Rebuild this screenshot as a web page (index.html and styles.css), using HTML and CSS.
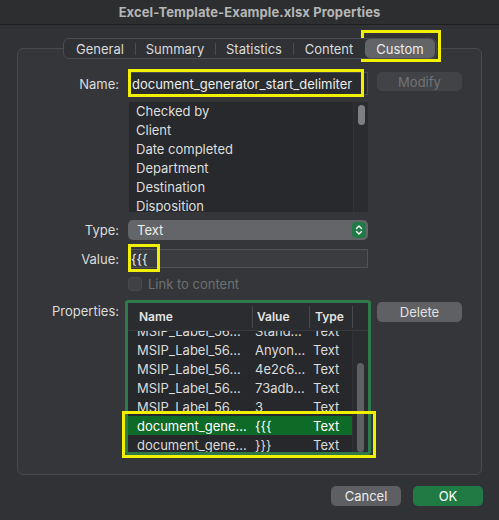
FILE: index.html
```html
<!DOCTYPE html>
<html>
<head>
<meta charset="utf-8">
<title>Excel-Template-Example.xlsx Properties</title>
<link rel="stylesheet" href="styles.css">
</head>
<body>
<div class="window">
  <div class="titlebar">Excel-Template-Example.xlsx Properties</div>
  <div class="tabs">
    <div class="tab w-general">General</div>
    <div class="tab w-summary sep">Summary</div>
    <div class="tab w-stats sep">Statistics</div>
    <div class="tab w-content sep">Content</div>
    <div class="tab w-custom selected">Custom</div>
  </div>
  <div class="panel">
    <div class="row row-name">
      <div class="lbl">Name:</div>
      <div class="field name-field">document_generator_start_delimiter</div>
      <div class="btn btn-disabled">Modify</div>
    </div>
    <div class="row row-list">
      <div class="lbl"></div>
      <div class="list">
        <div class="list-items">
          <div class="item">Checked by</div>
          <div class="item">Client</div>
          <div class="item">Date completed</div>
          <div class="item">Department</div>
          <div class="item">Destination</div>
          <div class="item">Disposition</div>
        </div>
        <div class="vscroll"><div class="thumb list-thumb"></div></div>
      </div>
    </div>
    <div class="row row-type">
      <div class="lbl">Type:</div>
      <div class="popup">
        <span class="popup-text">Text</span>
        <span class="stepper">
          <svg width="14" height="16" viewBox="0 0 14 16">
            <path d="M4.5 6.5 L7 4 L9.5 6.5" fill="none" stroke="#ffffff" stroke-width="1.4" stroke-linecap="round" stroke-linejoin="round"/>
            <path d="M4.5 9.5 L7 12 L9.5 9.5" fill="none" stroke="#ffffff" stroke-width="1.4" stroke-linecap="round" stroke-linejoin="round"/>
          </svg>
        </span>
      </div>
    </div>
    <div class="row row-value">
      <div class="lbl">Value:</div>
      <div class="field value-field">{{{</div>
    </div>
    <div class="row row-check">
      <div class="lbl"></div>
      <div class="check-wrap">
        <span class="checkbox"></span>
        <span class="check-label">Link to content</span>
      </div>
    </div>
    <div class="row row-props">
      <div class="lbl lbl-top">Properties:</div>
      <div class="table">
        <div class="thead">
          <div class="th c-name">Name</div>
          <div class="th c-value">Value</div>
          <div class="th c-type">Type</div>
          <div class="th c-scroll"></div>
        </div>
        <div class="tbody">
          <div class="rows">
            <div class="tr first"><span class="td c-name">MSIP_Label_56…</span><span class="td c-value">Stand…</span><span class="td c-type">Text</span></div>
            <div class="tr"><span class="td c-name">MSIP_Label_56…</span><span class="td c-value">Anyon…</span><span class="td c-type">Text</span></div>
            <div class="tr"><span class="td c-name">MSIP_Label_56…</span><span class="td c-value">4e2c6…</span><span class="td c-type">Text</span></div>
            <div class="tr"><span class="td c-name">MSIP_Label_56…</span><span class="td c-value">73adb…</span><span class="td c-type">Text</span></div>
            <div class="tr"><span class="td c-name">MSIP_Label_56…</span><span class="td c-value">3</span><span class="td c-type">Text</span></div>
            <div class="tr sel"><span class="td c-name">document_gene…</span><span class="td c-value">{{{</span><span class="td c-type">Text</span></div>
            <div class="tr"><span class="td c-name">document_gene…</span><span class="td c-value">}}}</span><span class="td c-type">Text</span></div>
          </div>
          <div class="tscroll"><div class="thumb table-thumb"></div></div>
        </div>
      </div>
      <div class="btn btn-delete">Delete</div>
    </div>
  </div>
  <div class="footer">
    <div class="btn btn-cancel">Cancel</div>
    <div class="btn btn-ok">OK</div>
  </div>

  <div class="hl hl-custom"></div>
  <div class="hl hl-name"></div>
  <div class="hl hl-value"></div>
  <div class="hl hl-table"></div>
</div>
</body>
</html>
```

FILE: styles.css
```css
html, body {
  margin: 0;
  padding: 0;
}
body {
  background: #303235;
  font-family: Inter, "Noto Sans", "Liberation Sans", sans-serif;
  font-size: 13px;
  color: #dedede;
}
.window {
  position: relative;
  width: 499px;
  height: 520px;
  overflow: hidden;
  background: #303235;
}
.titlebar {
  height: 24px;
  border-bottom: 1px solid #1d1e20;
  background: #2c2e30;
  display: flex;
  align-items: center;
  justify-content: center;
  font-weight: 700;
  color: #b6b6b6;
  letter-spacing: 0.1px;
}

/* tabs */
.tabs {
  position: relative;
  z-index: 1;
  margin: 13px 0 0 63px;
  width: 374px;
  height: 21px;
  box-sizing: border-box;
  border: 1px solid #4a4c4f;
  border-radius: 6px;
  background: #2f3134;
  display: flex;
  align-items: center;
  padding: 0 1px;
}
.tab {
  height: 19px;
  display: flex;
  align-items: center;
  justify-content: center;
  color: #dcdcdc;
  box-sizing: border-box;
}
.tab.sep {
  background: linear-gradient(#4b4d50, #4b4d50) left center / 1px 12px no-repeat;
}
.w-general { width: 70px; }
.w-summary { width: 80px; }
.w-stats { width: 78px; }
.w-content { width: 72px; }
.w-custom { width: 70px; }
.tab.selected {
  background: #626467;
  border-radius: 5px;
  color: #ececec;
}

/* panel */
.panel {
  margin: -11px 17px 0 17px;
  height: 427px;
  box-sizing: border-box;
  border: 1px solid #484a4d;
  border-radius: 6px;
  background: #343639;
  padding-top: 23px;
}
.row {
  display: grid;
  grid-template-columns: 101px 240px 85px;
  column-gap: 9px;
  align-items: center;
}
.lbl {
  text-align: right;
  color: #dcdcdc;
}
.lbl-top {
  align-self: start;
  margin-top: 3px;
}
.row-name { height: 23px; }
.row-list { height: 110px; margin-top: 7px; }
.row-type { height: 20px; margin-top: 8px; }
.row-value { height: 19px; margin-top: 9px; }
.row-check { height: 14px; margin-top: 9px; }
.row-props { height: 155px; margin-top: 9px; align-items: start; }

.field {
  box-sizing: border-box;
  height: 100%;
  display: flex;
  align-items: center;
  white-space: nowrap;
  overflow: hidden;
}
.name-field {
  margin-left: 1px;
  background: #2a2c2f;
  border: 1px solid #4a4c4f;
  padding-left: 2px;
  color: #ececec;
}
.value-field {
  background: #3a3c3f;
  border: 1px solid #505255;
  padding-left: 2px;
  color: #ececec;
}

.btn {
  box-sizing: border-box;
  height: 19px;
  border-radius: 5px;
  display: flex;
  align-items: center;
  justify-content: center;
  color: #e2e2e2;
  background: #5e6063;
}
.btn-disabled {
  align-self: start;
  background: #414346;
  color: #727477;
}
.btn-delete {
  margin-top: 2px;
  height: 20px;
}

/* list */
.list {
  height: 100%;
  margin-left: 1px;
  display: flex;
  background: #27292c;
  overflow: hidden;
}
.list-items {
  flex: 1;
  padding-top: 0;
}
.item {
  height: 19px;
  line-height: 19px;
  padding-left: 7px;
  color: #dedede;
  white-space: nowrap;
}
.vscroll {
  width: 15px;
  background: #2a2c2f;
  border-left: 1px solid #323437;
  display: flex;
  justify-content: center;
  padding-top: 3px;
  box-sizing: border-box;
}
.thumb {
  width: 7px;
  border-radius: 4px;
}
.list-thumb {
  height: 20px;
  background: #7d7f82;
}

/* popup */
.popup {
  height: 20px;
  box-sizing: border-box;
  background: #636568;
  border-radius: 5px;
  display: flex;
  align-items: center;
  justify-content: space-between;
  padding: 0 2px 0 9px;
  color: #ececec;
}
.stepper {
  width: 14px;
  height: 16px;
  background: #217a45;
  border-radius: 4px;
  display: flex;
}

/* checkbox */
.check-wrap {
  display: flex;
  align-items: center;
  gap: 6px;
  height: 14px;
}
.checkbox {
  width: 14px;
  height: 14px;
  box-sizing: border-box;
  border-radius: 4px;
  background: #3f4144;
  border: 1px solid #47494c;
}
.check-label {
  color: #6e7073;
}

/* table */
.table {
  margin: 0 -3px;
  height: 155px;
  box-sizing: border-box;
  border: 3px solid #2e7a4b;
  border-radius: 3px;
  background: #26282b;
  display: flex;
  flex-direction: column;
  overflow: hidden;
}
.thead {
  height: 28px;
  flex: none;
  display: flex;
  align-items: center;
  background: #2a2c2f;
  border-bottom: 1px solid #38393c;
  box-sizing: border-box;
}
.th {
  font-size: 12px;
  font-weight: 600;
  color: #e4e4e4;
  height: 28px;
  line-height: 28px;
  box-sizing: border-box;
}
.th.c-value, .th.c-type, .th.c-scroll {
  background: linear-gradient(#48494c, #48494c) left center / 1px 22px no-repeat;
}
.c-name { width: 124px; }
.c-value { width: 57px; }
.c-type { width: 43px; }
.c-scroll { width: 16px; }
.th.c-name { padding-left: 11px; }
.th.c-value { padding-left: 5px; }
.th.c-type { padding-left: 6px; }

.tbody {
  flex: 1;
  display: flex;
  overflow: hidden;
}
.rows {
  width: 224px;
  overflow: hidden;
}
.tr {
  height: 19px;
  display: flex;
  align-items: center;
  white-space: nowrap;
}
.tr.first {
  margin-top: -10px;
}
.td {
  overflow: hidden;
  box-sizing: border-box;
  color: #dcdcdc;
}
.td.c-name { padding-left: 9px; }
.td.c-value { padding-left: 3px; }
.td.c-type { padding-left: 4px; }
.tr.sel {
  background: #0e6a27;
}
.tr.sel .td {
  color: #ffffff;
}
.tscroll {
  width: 16px;
  background: #2a2c2f;
  border-left: 1px solid #303235;
  box-sizing: border-box;
  display: flex;
  justify-content: center;
  padding-top: 32px;
}
.table-thumb {
  height: 89px;
  background: #5e6063;
}

/* footer */
.footer {
  display: flex;
  justify-content: flex-end;
  gap: 12px;
  margin-top: 11px;
  padding-right: 16px;
}
.btn-cancel, .btn-ok {
  width: 70px;
  height: 20px;
}
.btn-cancel {
  background: #5d5f62;
  color: #ebebeb;
}
.btn-ok {
  background: #1f7a44;
  color: #ffffff;
}

/* yellow annotation boxes */
.hl {
  position: absolute;
  box-sizing: border-box;
  border: 3px solid #f0f000;
  pointer-events: none;
}
.hl-custom { left: 361px; top: 30px; width: 80px; height: 32px; }
.hl-name { left: 128px; top: 69px; width: 236px; height: 28px; }
.hl-value { left: 128px; top: 244px; width: 32px; height: 28px; }
.hl-table { left: 122px; top: 411px; width: 254px; height: 47px; }
```
